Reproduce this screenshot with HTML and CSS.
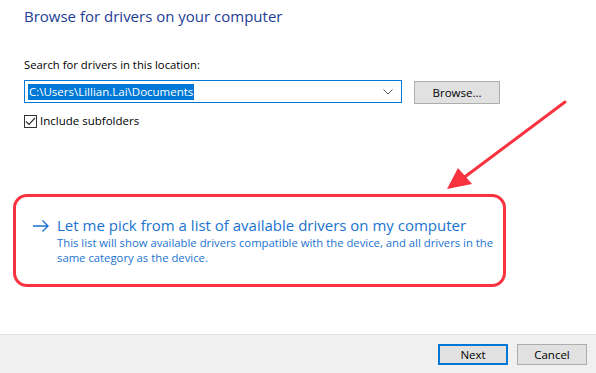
FILE: index.html
```html
<!DOCTYPE html>
<html>
<head>
<meta charset="utf-8">
<link rel="stylesheet" href="styles.css">
</head>
<body>
<div class="dialog">
  <div class="main">
    <h1 class="title">Browse for drivers on your computer</h1>
    <div class="label">Search for drivers in this location:</div>
    <div class="path-row">
      <div class="combo">
        <span class="sel">C:\Users\Lillian.Lai\Documents</span>
        <svg class="chev" width="10" height="6" viewBox="0 0 10 6"><path d="M0.5 0.5 L5 5 L9.5 0.5" fill="none" stroke="#555" stroke-width="1"/></svg>
      </div>
      <div class="btn browse">Browse...</div>
    </div>
    <div class="check-row">
      <span class="checkbox"><svg width="11" height="11" viewBox="0 0 11 11"><path d="M1 5.5 L4 8.5 L10 2" fill="none" stroke="#333" stroke-width="1.2"/></svg></span>
      <span>Include subfolders</span>
    </div>
    <div class="option">
      <div class="opt-head">
        <svg class="opt-arrow" width="16" height="12" viewBox="0 0 16 12"><path d="M0 6 H15 M9.5 0.5 L15 6 L9.5 11.5" fill="none" stroke="#1a73d0" stroke-width="1.4"/></svg>
        <span class="opt-title">Let me pick from a list of available drivers on my computer</span>
      </div>
      <div class="opt-desc">This list will show available drivers compatible with the device, and all drivers in the same category as the device.</div>
    </div>
    <svg class="pointer" width="596" height="334" viewBox="0 0 596 334">
      <line x1="565" y1="102" x2="462" y2="179" stroke="#f8323f" stroke-width="3" stroke-linecap="round"/>
      <polygon points="447,189 458,168 472,184" fill="#f8323f"/>
    </svg>
  </div>
  <div class="footer">
    <div class="btn next">Next</div>
    <div class="btn cancel">Cancel</div>
  </div>
</div>
</body>
</html>
```
FILE: styles.css
```css
html, body {
  margin: 0;
  padding: 0;
  background: #ffffff;
}
body {
  font-family: "Open Sans", "Noto Sans", sans-serif;
  color: #000;
}
.dialog {
  width: 596px;
  height: 373px;
  display: flex;
  flex-direction: column;
}
.main {
  position: relative;
  height: 334px;
  padding-left: 24px;
  box-sizing: border-box;
  display: flex;
  flex-direction: column;
}
.title {
  margin: 6px 0 0 0;
  font-size: 15px;
  font-weight: normal;
  color: #1e3d96;
  line-height: 20px;
}
.label {
  margin-top: 31px;
  font-size: 11.3px;
  line-height: 16px;
}
.path-row {
  margin-top: 7px;
  display: flex;
  align-items: flex-start;
  gap: 12px;
}
.combo {
  width: 378px;
  height: 23px;
  box-sizing: border-box;
  border: 1px solid #0078d7;
  display: flex;
  align-items: center;
  padding-left: 3px;
  padding-right: 8px;
  justify-content: space-between;
}
.sel {
  background: #0078d7;
  color: #fff;
  font-size: 11.5px;
  line-height: 16px;
  padding: 0 1px;
}
.chev { display: block; }
.btn {
  box-sizing: border-box;
  background: #e1e1e1;
  border: 1px solid #adadad;
  font-size: 11.5px;
  display: flex;
  align-items: center;
  justify-content: center;
}
.browse {
  width: 86px;
  height: 23px;
  margin-top: 1px;
}
.check-row {
  margin-top: 10px;
  display: flex;
  align-items: center;
  gap: 3px;
  font-size: 11.5px;
  line-height: 14px;
}
.checkbox {
  width: 13px;
  height: 13px;
  box-sizing: border-box;
  border: 1px solid #333;
  display: flex;
  align-items: center;
  justify-content: center;
}
.option {
  margin-top: 66px;
  margin-left: -11px;
  width: 493px;
  height: 93px;
  box-sizing: border-box;
  border: 3px solid #f8323f;
  border-radius: 14px;
  padding: 19px 0 0 17px;
  color: #1a73d0;
}
.opt-head {
  display: flex;
  align-items: center;
  gap: 8px;
}
.opt-arrow { display: block; margin-top: 2px; }
.opt-title {
  font-size: 15px;
  line-height: 18px;
}
.opt-desc {
  margin-left: 24px;
  font-size: 11.3px;
  line-height: 15px;
  margin-top: 1px;
  width: 450px;
}
.pointer {
  position: absolute;
  left: 0;
  top: 0;
  pointer-events: none;
}
.footer {
  height: 39px;
  box-sizing: border-box;
  border-top: 1px solid #dfdfdf;
  background: #f0f0f0;
  display: flex;
  justify-content: flex-end;
  align-items: flex-start;
  padding: 9px 9px 0 0;
  gap: 9px;
}
.next, .cancel {
  width: 70px;
  height: 21px;
}
.next {
  border: 2px solid #0078d7;
}
```
